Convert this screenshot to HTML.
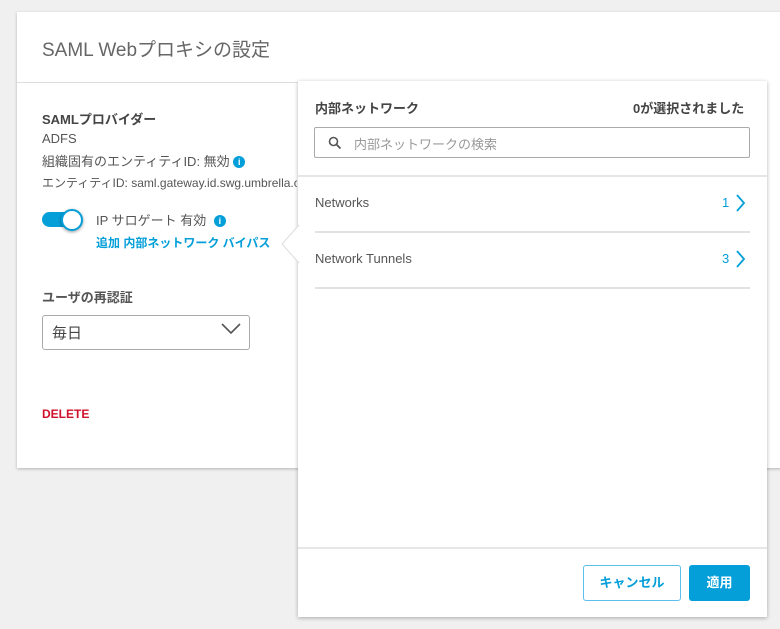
<!DOCTYPE html>
<html><head><meta charset="utf-8"><style>
*{box-sizing:border-box;margin:0;padding:0}
body{width:780px;height:629px;background:#f0f0f0;position:relative;overflow:hidden;font-family:"Liberation Sans","Noto Sans CJK JP",sans-serif;color:#555}
.abs{position:absolute;white-space:nowrap}
.card{position:absolute;left:17px;top:12px;width:770px;height:456px;background:#fff;box-shadow:0 1px 3px rgba(0,0,0,.25)}
.pop{position:absolute;left:298px;top:81px;width:469px;height:536px;background:#fff;box-shadow:0 1px 4px rgba(0,0,0,.3)}
.info{display:inline-block;width:12px;height:12px;border-radius:50%;background:#049fd9;color:#fff;font-size:9px;text-align:center;line-height:12px;font-weight:bold;vertical-align:1px}
</style></head><body>
<div class="card"></div>
<div class="abs" style="left:42px;top:35px;font-size:19px;color:#666">SAML Webプロキシの設定</div>
<div class="abs" style="left:17px;top:82px;width:290px;height:1px;background:#ddd"></div>
<div class="abs" style="left:42px;top:109px;font-size:13px;font-weight:bold;color:#444">SAMLプロバイダー</div>
<div class="abs" style="left:42px;top:131px;font-size:13px">ADFS</div>
<div class="abs" style="left:42px;top:151px;font-size:13px">組織固有のエンティティID: 無効 <span class="info">i</span></div>
<div class="abs" style="left:42px;top:174px;font-size:12px;width:255px;overflow:hidden">エンティティID: saml.gateway.id.swg.umbrella.com</div>
<div class="abs" style="left:42px;top:212px;width:36px;height:15px;border-radius:8px;background:#049fd9"></div>
<div class="abs" style="left:61px;top:209px;width:22px;height:22px;border-radius:50%;background:#fff;border:2px solid #049fd9;box-shadow:0 1px 3px rgba(0,0,0,.4)"></div>
<div class="abs" style="left:96px;top:210px;font-size:13px">IP サロゲート 有効 <span class="info" style="margin-left:4px">i</span></div>
<div class="abs" style="left:96px;top:234px;font-size:12px;font-weight:bold;color:#049fd9">追加 内部ネットワーク バイパス</div>
<div class="abs" style="left:42px;top:287px;font-size:13px;font-weight:bold;color:#555">ユーザの再認証</div>
<div class="abs" style="left:42px;top:315px;width:208px;height:35px;border:1px solid #aaa;border-radius:3px"></div>
<div class="abs" style="left:52px;top:322px;font-size:15px;color:#444">毎日</div>
<svg class="abs" style="left:220px;top:322px" width="22" height="14"><path d="M2 2l9 9 9-9" fill="none" stroke="#555" stroke-width="1.6"/></svg>
<div class="abs" style="left:42px;top:407px;font-size:12px;font-weight:bold;color:#d0112b">DELETE</div>
<div class="pop"></div>
<svg class="abs" style="left:281px;top:225px" width="19" height="38"><path d="M18 0L1 19l17 19" fill="#fff" stroke="#ddd"/></svg>
<div class="abs" style="left:315px;top:98px;font-size:13px;font-weight:bold;color:#444">内部ネットワーク</div>
<div class="abs" style="left:633px;top:98px;font-size:13px;font-weight:bold;color:#444">0が選択されました</div>
<div class="abs" style="left:314px;top:127px;width:436px;height:31px;border:1px solid #aaa;border-radius:2px"></div>
<svg class="abs" style="left:328px;top:136px" width="14" height="14"><circle cx="5.5" cy="5.5" r="4" fill="none" stroke="#555" stroke-width="1.6"/><path d="M8.5 8.5l4 4" stroke="#555" stroke-width="1.8"/></svg>
<div class="abs" style="left:354px;top:134px;font-size:13px;color:#999">内部ネットワークの検索</div>
<div class="abs" style="left:298px;top:175px;width:469px;height:2px;background:#e6e6e6"></div>
<div class="abs" style="left:315px;top:195px;font-size:13px">Networks</div>
<div class="abs" style="left:722px;top:195px;font-size:13px;color:#049fd9">1</div>
<svg class="abs" style="left:735px;top:193px" width="12" height="20"><path d="M2 2l7 8-7 8" fill="none" stroke="#049fd9" stroke-width="1.8"/></svg>
<div class="abs" style="left:315px;top:231px;width:435px;height:2px;background:#e2e2e2"></div>
<div class="abs" style="left:315px;top:251px;font-size:13px">Network Tunnels</div>
<div class="abs" style="left:722px;top:251px;font-size:13px;color:#049fd9">3</div>
<svg class="abs" style="left:735px;top:249px" width="12" height="20"><path d="M2 2l7 8-7 8" fill="none" stroke="#049fd9" stroke-width="1.8"/></svg>
<div class="abs" style="left:315px;top:287px;width:435px;height:2px;background:#e2e2e2"></div>
<div class="abs" style="left:298px;top:547px;width:469px;height:2px;background:#e6e6e6"></div>
<div class="abs" style="left:583px;top:565px;width:98px;height:36px;border:1px solid #5cc0e8;border-radius:3px;text-align:center;line-height:34px;font-size:13px;font-weight:bold;color:#049fd9">キャンセル</div>
<div class="abs" style="left:689px;top:565px;width:61px;height:36px;background:#049fd9;border-radius:3px;text-align:center;line-height:36px;font-size:13px;font-weight:bold;color:#fff">適用</div>
</body></html>
